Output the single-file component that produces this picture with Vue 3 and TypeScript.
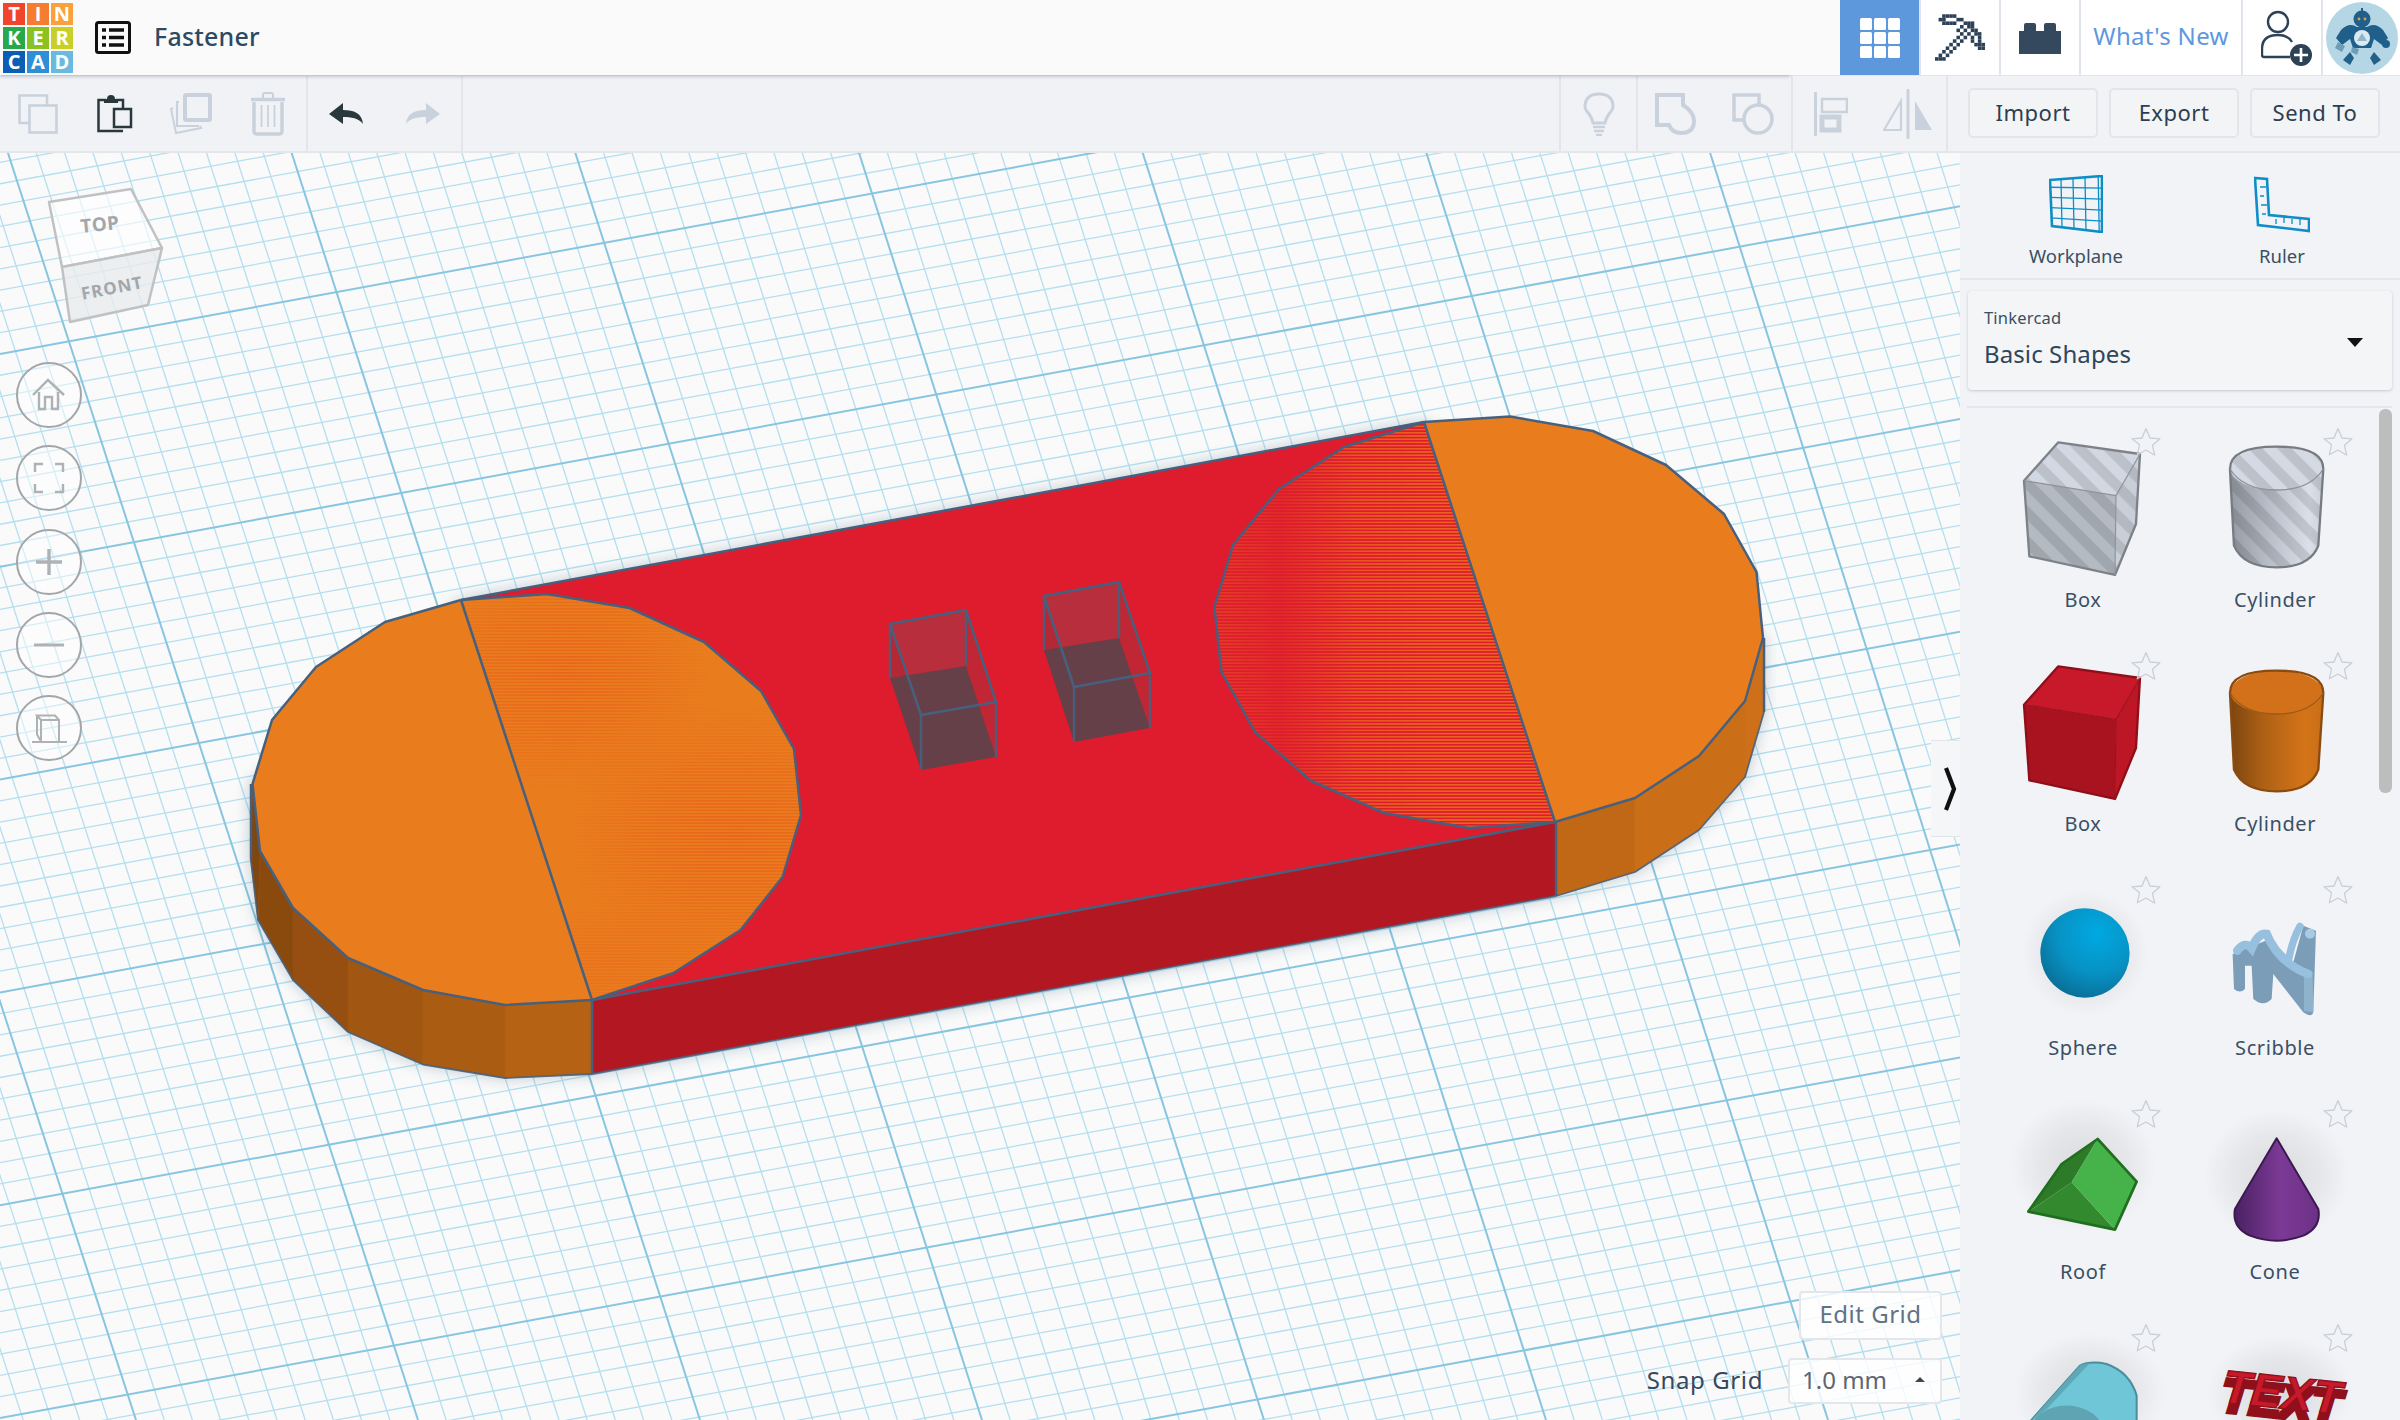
<script setup lang="ts">
type Pt = [number, number]
const pts = (list: Pt[]) => list.map((p) => p.join(',')).join(' ')

interface Seg { x1: number; y1: number; x2: number; y2: number }
const minorLines: Seg[] = []
const majorLines: Seg[] = []
for (let i = -25; i <= 72; i++) {
  const t = i / 10
  const seg = { x1: 7 + 283.7 * t, y1: 150, x2: 418 + 282 * t, y2: 1420 }
  ;(i % 10 === 0 ? majorLines : minorLines).push(seg)
}
for (let j = -10; j <= 85; j++) {
  const y0 = 354 + 212.8 * (j / 10)
  const seg = { x1: 0, y1: y0, x2: 1960, y2: y0 - 0.184 * 1960 }
  ;(j % 10 === 0 ? majorLines : minorLines).push(seg)
}

const discLeftLeft: Pt[] = [[461,600],[385,622],[316,667],[272,720],[252.5,784],[260,851],[293,908],[348,958],[423,990],[505,1005],[592,1000]]
const discLeftRight: Pt[] = [[592,1000],[673.5,973],[740.5,930],[782.6,877],[801,815],[794,749],[761,691],[704,642],[629.5,608],[547,594],[461,600]]
const discRightRight: Pt[] = [[1424,422],[1510,416.5],[1593,431],[1666,465],[1724,514],[1756.5,572],[1763,638],[1745,701],[1699,756],[1635,798],[1555,822]]
const discRightLeft: Pt[] = [[1555,822],[1469,828],[1384,813],[1310.5,780.5],[1255,732],[1221.5,672],[1214.4,607],[1233,545],[1279,489],[1344,447],[1424,422]]

const leftTop: Pt[] = [[252.5,784],[260,851],[293,908],[348,958],[423,990],[505,1005],[592,1000]]
const leftBottom: Pt[] = [[250.6,858],[258,920],[293,980],[348,1032],[423,1064.5],[505,1078],[592,1074]]
const leftColors = ['#7f4610','#8a4a0e','#964f10','#a15711','#ab5c13','#b66214']
const rightTop: Pt[] = [[1555,822],[1635,798],[1699,756],[1745,701],[1764,638]]
const rightBottom: Pt[] = [[1556,896],[1635,872],[1699,830],[1745,777],[1764,712]]
const rightColors = ['#c06816','#ca6e18','#ca6e18','#cd7019']

function segs(top: Pt[], bottom: Pt[], colors: string[]) {
  return colors.map((fill, i) => ({
    fill,
    points: pts([top[i], top[i + 1], bottom[i + 1], bottom[i]]),
  }))
}
const sideSegs = [...segs(leftTop, leftBottom, leftColors), ...segs(rightTop, rightBottom, rightColors)]
const baseOutline = pts([...leftBottom, ...rightBottom, [1764,638], [1424,422], [461,600], [250,784]])

interface Hole { a: Pt; b: Pt; c: Pt; d: Pt; e: Pt; f: Pt; g: Pt; h: Pt }
const holes: Hole[] = [
  { a:[890,624], b:[966,610], c:[996,702], d:[921,715], e:[890,678], f:[966,666], g:[996,757], h:[921,770] },
  { a:[1044,596], b:[1119,582], c:[1150,673], d:[1074,687], e:[1044,650], f:[1119,638], g:[1150,728], h:[1074,742] },
]
const holeFaces = holes.map((H) => ({
  back: pts([H.a, H.b, H.f, H.e]),
  left: pts([H.a, H.e, H.h, H.d]),
  right: pts([H.b, H.c, H.g, H.f]),
  floor: pts([H.e, H.f, H.g, H.h]),
  top: pts([H.a, H.b, H.c, H.d]),
  edges: [[H.a, H.e], [H.b, H.f], [H.c, H.g], [H.d, H.h]] as Pt[][],
}))

const pickRows = [
  '..####........',
  '.##...##......',
  '..####..###...',
  '.......#.##...',
  '......#.#.##..',
  '.......#.#.##.',
  '......#.#.#.#.',
  '.....#.#..#.#.',
  '....#.#....###',
  '...#.#......##',
  '..#.#.........',
  '.#.#..........',
  '###...........',
]
const pickPixels = pickRows.flatMap((row, y) =>
  row.split('').flatMap((c, x) => (c === '#' ? [{ x: x * 11, y: y * 11 }] : [])),
)

const gridCells = [0, 1, 2].flatMap((r) => [0, 1, 2].map((c) => ({ x: c * 14, y: r * 14 })))

const wpV = [10, 20, 30, 41]
const wpH = [12, 22, 32, 42]

const shapes = [
  { label: 'Box', kind: 'boxGray' },
  { label: 'Cylinder', kind: 'cylGray' },
  { label: 'Box', kind: 'boxRed' },
  { label: 'Cylinder', kind: 'cylOrange' },
  { label: 'Sphere', kind: 'sphere' },
  { label: 'Scribble', kind: 'scribble' },
  { label: 'Roof', kind: 'roof' },
  { label: 'Cone', kind: 'cone' },
  { label: 'Round Roof', kind: 'roundRoof' },
  { label: 'Text', kind: 'text' },
]
const navItems = ['home', 'fit', 'plus', 'minus', 'persp']
const logo = [
  { t: 'T', c: '#f0452b' }, { t: 'I', c: '#f57d2f' }, { t: 'N', c: '#f9a03f' },
  { t: 'K', c: '#25a94b' }, { t: 'E', c: '#8cc220' }, { t: 'R', c: '#c8d028' },
  { t: 'C', c: '#0a5fb4' }, { t: 'A', c: '#2f8fd6' }, { t: 'D', c: '#6cb9e0' },
]
</script>

<template>
  <div class="app">
    <svg class="defs" width="0" height="0">
      <defs>
        <pattern id="stripeGrayZoom" width="62" height="62" patternUnits="userSpaceOnUse" patternTransform="rotate(45)">
          <rect width="62" height="31" fill="#000" opacity=".11" />
        </pattern>
        <linearGradient id="cylOrangeSide" x1="0" x2="1" y1="0" y2="0">
          <stop offset="0" stop-color="#7b4510" />
          <stop offset=".35" stop-color="#ad6015" />
          <stop offset=".8" stop-color="#d47418" />
          <stop offset="1" stop-color="#c96e17" />
        </linearGradient>
        <linearGradient id="cylGraySide" x1="0" x2="1" y1="0" y2="0">
          <stop offset="0" stop-color="#959ba4" />
          <stop offset=".5" stop-color="#bfc5cf" />
          <stop offset=".85" stop-color="#dadfe8" />
          <stop offset="1" stop-color="#ccd2dc" />
        </linearGradient>
        <radialGradient id="sphereGrad" cx=".63" cy=".28" r=".8">
          <stop offset="0" stop-color="#00a9e2" />
          <stop offset=".55" stop-color="#0792c4" />
          <stop offset="1" stop-color="#0a6a92" />
        </radialGradient>
        <linearGradient id="coneGrad" x1="0" x2="1" y1="0" y2="0">
          <stop offset="0" stop-color="#4a2162" />
          <stop offset=".55" stop-color="#7c3a96" />
          <stop offset="1" stop-color="#6b3185" />
        </linearGradient>
        <radialGradient id="halo">
          <stop offset="0" stop-color="#000" stop-opacity=".1" />
          <stop offset=".6" stop-color="#000" stop-opacity=".05" />
          <stop offset="1" stop-color="#000" stop-opacity="0" />
        </radialGradient>
      </defs>
    </svg>

    <header class="topbar">
      <div class="top-left">
        <div class="logo">
          <span v-for="l in logo" :key="l.t" class="logo-cell" :style="{ background: l.c }">{{ l.t }}</span>
        </div>
        <svg class="list-icon" width="36" height="33" viewBox="0 0 36 33">
          <rect x="1.5" y="1.5" width="33" height="30" rx="2" fill="none" stroke="#111" stroke-width="3" />
          <path d="M7 9h4M14 9h15M7 16.500h4M14 16.500h15M7 24h4M14 24h15" stroke="#111" stroke-width="3.600" fill="none" />
        </svg>
        <span class="title">Fastener</span>
      </div>
      <div class="top-gap"></div>
      <nav class="top-nav">
        <div class="nav-item active w79">
          <svg width="40" height="40" viewBox="0 0 40 40">
            <rect v-for="c in gridCells" :key="c.x + '-' + c.y" :x="c.x" :y="c.y" width="12" height="12" rx="1.500" fill="#fff" />
          </svg>
        </div>
        <div class="nav-item w80 sep">
          <svg width="50" height="47" viewBox="0 0 154 143">
            <rect v-for="(p, i) in pickPixels" :key="i" :x="p.x" :y="p.y" width="11" height="11" fill="#2d4256" />
          </svg>
        </div>
        <div class="nav-item w80 sep">
          <svg width="42" height="32" viewBox="0 0 42 32">
            <path d="M0 9h5V3q0-2 2-2h8q2 0 2 2v6h8V3q0-2 2-2h8q2 0 2 2v6h5v23H0z" fill="#34495e" />
          </svg>
        </div>
        <div class="nav-item w162 sep whats-new">What's New</div>
        <div class="nav-item w80 sep user-item">
          <svg width="52" height="56" viewBox="0 0 52 56">
            <circle cx="17" cy="12" r="10" fill="none" stroke="#2d4256" stroke-width="2.400" />
            <path d="M29 47H3q-2 0-2-2v-6q0-14 16-14 10 0 14 7" fill="none" stroke="#2d4256" stroke-width="2.400" />
            <circle cx="40" cy="45" r="11" fill="#2d4256" />
            <path d="M40 38v14M33 45h14" stroke="#fff" stroke-width="2.600" />
          </svg>
        </div>
        <div class="nav-item w79 sep">
          <svg width="72" height="72" viewBox="0 0 72 72">
            <circle cx="36" cy="36" r="36" fill="#b5d7e5" />
            <circle cx="36" cy="17" r="8.500" fill="#1f5f8a" />
            <path d="M36 6v4" stroke="#1f5f8a" stroke-width="2" />
            <circle cx="33" cy="17" r="1.400" fill="#d9a24a" /><circle cx="39" cy="17" r="1.400" fill="#d9a24a" />
            <path d="M15 28q8-8 16-3h10q8-5 16 3l5 8-6 7-8-6-3 9H27l-3-9-8 6-6-7z" fill="#1f5f8a" />
            <circle cx="36" cy="36" r="8" fill="#dbeaf1" />
            <path d="M36 31l5 8h-10z" fill="#8fb6cc" />
            <path d="M24 50l-7 8 7 5 4-7zM48 50l7 8-7 5-4-7z" fill="#24618a" />
            <path d="M12 40l7 4-3 6-7-4zM26 45l7 2-2 6-6-3z" fill="#6f9db8" />
            <circle cx="60" cy="42" r="4" fill="#1f5f8a" />
          </svg>
        </div>
      </nav>
    </header>

    <div class="toolbar">
      <div class="tool-group w308 divided">
        <div class="tbtn">
          <svg width="40" height="40" viewBox="0 0 40 40" fill="none" stroke="#c9d2dc" stroke-width="2.600">
            <path d="M11 29H1.500V1.500H29V11" /><rect x="11.500" y="11.500" width="27" height="27" />
          </svg>
        </div>
        <div class="tbtn">
          <svg width="36" height="40" viewBox="0 0 36 40" fill="none" stroke="#29383d" stroke-width="2.500">
            <path d="M9 6H1.500v31H26" /><path d="M26 14V6h-7" />
            <path d="M9 9V5h3q0-4 4-4t4 4h3v4z" fill="#29383d" stroke="none" transform="translate(-2 0)" />
            <rect x="17" y="15" width="17" height="18" fill="#f1f2f5" />
          </svg>
        </div>
        <div class="tbtn">
          <svg width="42" height="42" viewBox="0 0 42 42" fill="none" stroke="#c9d2dc">
            <path d="M3 15l-2 1 5 24 25-5-1-2" stroke-width="2" />
            <path d="M9 9L7 9v24h22" stroke-width="2.200" />
            <rect x="15" y="2" width="25" height="25" rx="1" stroke-width="4" />
          </svg>
        </div>
        <div class="tbtn">
          <svg width="34" height="44" viewBox="0 0 34 44" fill="none" stroke="#c9d2dc">
            <path d="M0 7.500h34" stroke-width="3.500" />
            <path d="M12 6V3q0-2 2-2h6q2 0 2 2v3" stroke-width="2" />
            <path d="M3 10v29q0 3 3 3h22q3 0 3-3V10" stroke-width="3.500" />
            <path d="M10.500 13v22M17 13v22M23.500 13v22" stroke-width="1.800" />
          </svg>
        </div>
      </div>
      <div class="tool-group w155 divided">
        <div class="tbtn">
          <svg width="34" height="22" viewBox="0 0 34 22"><path d="M0 11L14 0v7c11 0 19 3 20 14-4-6-12-7-20-7v7z" fill="#29383d" /></svg>
        </div>
        <div class="tbtn">
          <svg width="34" height="22" viewBox="0 0 34 22"><path d="M34 11L20 0v7C9 7 1 10 0 21c4-6 12-7 20-7v7z" fill="#c9d2dc" /></svg>
        </div>
      </div>
      <div class="tool-spacer"></div>
      <div class="tool-group w79 divided-l divided">
        <div class="tbtn">
          <svg width="32" height="44" viewBox="0 0 32 44" fill="none" stroke="#c9d2dc" stroke-width="3">
            <path d="M10 31q-1-5-4-9Q2 17 2 15 2 2 16 2t14 13q0 2-4 7-3 4-4 9z" />
            <path d="M10 35h12M11 39h10M13 43h6" stroke-width="2.500" />
          </svg>
        </div>
      </div>
      <div class="tool-group w155 divided">
        <div class="tbtn">
          <svg width="42" height="42" viewBox="0 0 42 42" fill="none" stroke="#c9d2dc" stroke-width="4">
            <path d="M2 2h26v10q11 7 11 16 0 12-13 12-9 0-12-8H2z" />
          </svg>
        </div>
        <div class="tbtn">
          <svg width="42" height="42" viewBox="0 0 42 42" fill="none" stroke="#c9d2dc" stroke-width="3.500">
            <path d="M12 27H2V2h25v10" /><circle cx="26" cy="26" r="14" />
          </svg>
        </div>
      </div>
      <div class="tool-group w155 divided">
        <div class="tbtn">
          <svg width="34" height="44" viewBox="0 0 34 44">
            <rect width="3" height="44" x="0" rx="1" fill="#c9d2dc" />
            <rect x="8" y="7" width="25" height="13" fill="none" stroke="#c9d2dc" stroke-width="2.500" />
            <rect x="8" y="25" width="17" height="13" fill="none" stroke="#c9d2dc" stroke-width="5" />
          </svg>
        </div>
        <div class="tbtn">
          <svg width="50" height="50" viewBox="0 0 50 50">
            <rect x="23.500" width="3" height="50" rx="1" fill="#c9d2dc" />
            <path d="M18 12v29H1z" fill="none" stroke="#c9d2dc" stroke-width="2.200" />
            <path d="M32 12v29h17z" fill="#c9d2dc" />
          </svg>
        </div>
      </div>
      <div class="action-group">
        <button class="action">Import</button>
        <button class="action">Export</button>
        <button class="action">Send To</button>
      </div>
    </div>

    <div class="work">
      <main class="canvas">
        <svg class="scene" width="1960" height="1267" viewBox="0 153 1960 1267">
          <defs>
            <filter id="paper" x="0" y="0" width="100%" height="100%">
              <feTurbulence type="fractalNoise" baseFrequency=".8" numOctaves="2" seed="4" />
              <feColorMatrix values="0 0 0 0 .6 0 0 0 0 .6 0 0 0 0 .6 0 0 0 .09 0" />
            </filter>
            <filter id="soft" x="-10%" y="-10%" width="120%" height="120%"><feGaussianBlur stdDeviation="8" /></filter>
            <pattern id="zfightA" width="4" height="3.200" patternUnits="userSpaceOnUse">
              <rect width="4" height="1.500" fill="#ea5f1c" />
            </pattern>
            <pattern id="zfightB" width="4" height="3.200" patternUnits="userSpaceOnUse">
              <rect width="4" height="1.600" fill="#e9631f" />
            </pattern>
            <radialGradient id="blob">
              <stop offset="0" stop-color="#fff" stop-opacity=".95" />
              <stop offset=".55" stop-color="#fff" stop-opacity=".55" />
              <stop offset="1" stop-color="#fff" stop-opacity="0" />
            </radialGradient>
            <mask id="maskA" maskUnits="userSpaceOnUse" x="440" y="580" width="380" height="440">
              <ellipse cx="565" cy="670" rx="150" ry="125" fill="url(#blob)" />
              <ellipse cx="735" cy="835" rx="175" ry="135" fill="url(#blob)" />
              <ellipse cx="620" cy="960" rx="110" ry="60" fill="url(#blob)" opacity=".55" />
            </mask>
            <linearGradient id="fadeB" gradientUnits="userSpaceOnUse" x1="1214" x2="1440" y1="0" y2="0">
              <stop offset="0" stop-color="#fff" stop-opacity=".5" />
              <stop offset=".3" stop-color="#fff" stop-opacity=".22" />
              <stop offset=".62" stop-color="#fff" stop-opacity=".8" />
              <stop offset="1" stop-color="#fff" />
            </linearGradient>
            <mask id="maskB" maskUnits="userSpaceOnUse" x="1200" y="410" width="370" height="430">
              <rect x="1200" y="410" width="370" height="430" fill="url(#fadeB)" />
            </mask>
          </defs>

          <rect x="0" y="153" width="1960" height="1267" fill="#fcfcfc" />
          <g class="minor"><line v-for="(l, i) in minorLines" :key="'m' + i" :x1="l.x1" :y1="l.y1" :x2="l.x2" :y2="l.y2" /></g>
          <g class="major"><line v-for="(l, i) in majorLines" :key="'M' + i" :x1="l.x1" :y1="l.y1" :x2="l.x2" :y2="l.y2" /></g>
          <rect x="0" y="153" width="1960" height="1267" filter="url(#paper)" />

          <polygon :points="baseOutline" fill="#2c5a76" opacity=".32" filter="url(#soft)" />

          <polygon v-for="(s, i) in sideSegs" :key="'s' + i" :points="s.points" :fill="s.fill" :stroke="s.fill" stroke-width=".6" />
          <polygon points="592,1000 1555,822 1556,896 592,1074" fill="#b31722" />
          <polygon points="461,600 1424,422 1555,822 592,1000" fill="#de1c2d" />

          <g v-for="(h, i) in holeFaces" :key="'h' + i">
            <polygon :points="h.back" fill="#b92e3c" />
            <polygon :points="h.left" fill="#b42836" />
            <polygon :points="h.right" fill="#c12634" />
            <polygon :points="h.floor" fill="#664048" />
            <polygon :points="h.top" fill="none" stroke="#47607d" stroke-width="2.500" stroke-linejoin="round" />
            <line v-for="(e, j) in h.edges" :key="j" :x1="e[0][0]" :y1="e[0][1]" :x2="e[1][0]" :y2="e[1][1]" stroke="#47607d" stroke-width="2.500" opacity=".9" />
          </g>

          <polygon :points="pts([...discLeftLeft, ...discLeftRight])" fill="#e97d1e" />
          <polygon :points="pts(discLeftRight)" fill="url(#zfightA)" mask="url(#maskA)" />
          <polygon :points="pts(discRightRight)" fill="#e97d1e" />
          <polygon :points="pts(discRightLeft)" fill="url(#zfightB)" mask="url(#maskB)" />

          <g class="edge">
            <polyline :points="pts([...discLeftLeft, ...discLeftRight])" />
            <polyline :points="pts([...discRightRight, ...discRightLeft])" />
            <line x1="461" y1="600" x2="592" y2="1000" />
            <line x1="1424" y1="422" x2="1555" y2="822" />
            <line x1="461" y1="600" x2="1424" y2="422" />
            <line x1="592" y1="1000" x2="1555" y2="822" />
            <line x1="592" y1="1000" x2="592" y2="1074" />
            <line x1="1556" y1="822" x2="1556" y2="896" />
            <polyline :points="pts(leftBottom)" class="thin" />
            <polyline :points="pts(rightBottom)" class="thin" />
            <line x1="592" y1="1074" x2="1556" y2="896" class="thin" />
            <line x1="251" y1="784" x2="251" y2="858" />
            <line x1="1764" y1="638" x2="1764" y2="712" />
          </g>
        </svg>

        <svg class="cube-labels" width="170" height="150" viewBox="40 180 170 150">
          <polygon points="49,202 131,189 162,248 62,267" fill="#fff" fill-opacity=".6" stroke="#bfc1c3" stroke-width="2.500" stroke-linejoin="round" />
          <polygon points="62,267 162,248 148,305 70,322" fill="#e9ebed" fill-opacity=".8" stroke="#bfc1c3" stroke-width="2.500" stroke-linejoin="round" />
          <text x="100" y="231" class="cube-text" text-anchor="middle" transform="rotate(-6 100 224)">TOP</text>
          <text x="112" y="294" class="cube-text front" text-anchor="middle" transform="rotate(-11 112 288)">FRONT</text>
        </svg>

        <div class="nav-col">
          <div v-for="n in navItems" :key="n" class="nav-btn">
            <svg width="36" height="36" viewBox="0 0 36 36" fill="none" stroke="#aeb2b5" stroke-width="2.400">
              <path v-if="n === 'home'" d="M2 18L17 3l16 15M8 15v17h6V20h7v12h6V15" />
              <path v-else-if="n === 'fit'" d="M4 12V4h8M24 4h8v8M4 24v8h8M24 32h8v-8" />
              <path v-else-if="n === 'plus'" d="M18 5v26M5 18h26" stroke-width="3.400" />
              <path v-else-if="n === 'minus'" d="M3 18h30" stroke-width="3" />
              <path v-else d="M1 32h35M10 32V10h18v22M10 10L6 5.500H24l4 4.500M6 5.500v19l4 7" stroke-width="2" />
            </svg>
          </div>
        </div>

        <div class="tab">
          <svg width="14" height="46" viewBox="0 0 14 46"><path d="M3 2l8 21-8 21" fill="none" stroke="#111" stroke-width="4.200" /></svg>
        </div>

        <div class="grid-controls">
          <button class="edit-grid">Edit Grid</button>
          <div class="snap">
            <span class="snap-label">Snap Grid</span>
            <div class="snap-select">
              <span>1.0 mm</span>
              <i class="up-arrow"></i>
            </div>
          </div>
        </div>
      </main>

      <aside class="panel">
        <div class="tools">
          <div class="tool">
            <svg width="54" height="58" viewBox="0 0 54 58" fill="none" stroke="#0d8ec6">
              <path d="M1 5L53 1v56L3 51z" stroke-width="2.600" />
              <path v-for="v in wpV" :key="'v' + v" :d="`M${v * 1.2} ${4.500 - v * .07}L${v * 1.2 + 1} ${52 + v * .11}`" stroke-width="1.300" />
              <path v-for="h in wpH" :key="'h' + h" :d="`M${1 + h * .02} ${h * 1.02}L53 ${h * 1.1}`" stroke-width="1.300" />
            </svg>
            <span class="tool-label">Workplane</span>
          </div>
          <div class="tool">
            <svg width="56" height="54" viewBox="0 0 56 54" fill="none" stroke="#0d8ec6">
              <path d="M1 1l12 1 2 36 40 4v12L4 48z" stroke-width="2.600" />
              <path d="M6 10h6M6 19h4M7 28h6M8 37h4M22 42v5M30 40v6M38 42v5M46 42v6" stroke-width="1.300" />
            </svg>
            <span class="tool-label">Ruler</span>
          </div>
        </div>

        <div class="select">
          <div class="select-small">Tinkercad</div>
          <div class="select-main">Basic Shapes</div>
          <i class="down-arrow"></i>
        </div>
        <div class="panel-rule"></div>

        <div class="shapes">
          <div v-for="(s, i) in shapes" :key="i" class="shape">
            <svg class="star" width="30" height="30" viewBox="0 0 30 30">
              <path d="M15 1.500l4 9.500 10 .8-7.600 6.500 2.300 9.900L15 23l-8.700 4.700 2.300-9.900L1 11.800l10-.8z" fill="none" stroke="#c8cfd7" stroke-width="1.300" stroke-linejoin="round" />
            </svg>
            <svg class="thumb" width="192" height="168" viewBox="0 0 192 168">
              <g v-if="s.kind === 'boxGray' || s.kind === 'boxRed'" transform="translate(-37 -17) scale(.3333)">
                <g :class="s.kind === 'boxRed' ? 'bx red' : 'bx gray'" stroke-linejoin="round">
                  <polygon class="t" points="325,130 570,165 498,290 222,245" />
                  <polygon class="f" points="222,245 498,290 495,528 238,472" />
                  <polygon class="r" points="498,290 570,165 558,375 495,528" />
                  <template v-if="s.kind === 'boxGray'">
                    <polygon fill="url(#stripeGrayZoom)" points="325,130 570,165 498,290 222,245" />
                    <polygon fill="url(#stripeGrayZoom)" points="222,245 498,290 495,528 238,472" />
                    <polygon fill="url(#stripeGrayZoom)" points="498,290 570,165 558,375 495,528" />
                  </template>
                  <path class="o" d="M325 130L570 165 558 375 495 528 238 472 222 245z" />
                  <path class="i" d="M222 245L498 290 570 165M498 290L495 528" />
                </g>
              </g>
              <g v-else-if="s.kind === 'cylGray' || s.kind === 'cylOrange'" transform="translate(-229 -17) scale(.3333)">
                <path d="M840 210L852 440Q880 505 980 505T1105 440L1120 210z" :fill="s.kind === 'cylGray' ? 'url(#cylGraySide)' : 'url(#cylOrangeSide)'" />
                <ellipse cx="980" cy="208" rx="140" ry="65" :fill="s.kind === 'cylGray' ? '#d4d9e3' : '#d2711a'" />
                <path v-if="s.kind === 'cylGray'" d="M840 210L852 440Q880 505 980 505T1105 440L1120 210Q1120 143 980 143T840 210z" fill="url(#stripeGrayZoom)" />
                <path d="M840 210L852 440Q880 505 980 505T1105 440L1120 210Q1120 143 980 143T840 210z" fill="none" :stroke="s.kind === 'cylGray' ? '#777c82' : '#8a4b10'" stroke-width="7" />
                <path d="M840 210Q880 273 980 273T1120 210" fill="none" :stroke="s.kind === 'cylGray' ? '#8d9299' : '#9c5a16'" stroke-width="4" />
              </g>
              <g v-else-if="s.kind === 'sphere'" transform="translate(-37 35) scale(.3333)">
                <circle cx="405" cy="162" r="190" fill="url(#halo)" />
                <circle cx="405" cy="162" r="134" fill="url(#sphereGrad)" />
              </g>
              <g v-else-if="s.kind === 'scribble'" transform="translate(-229 35) scale(.3333)">
                <path d="M848 165L852 270Q870 285 885 270L885 200 905 200 910 300Q940 325 965 300L970 225 1060 340Q1085 358 1090 340L1098 95 1060 80 1030 190 960 120z" fill="#7b9db8" />
                <path d="M1062 215L1088 232 1090 340 1062 336z" fill="#8fb2cd" />
                <path d="M862 155Q885 125 905 148 925 100 950 105 985 190 1075 225" fill="none" stroke="#97c0de" stroke-width="26" stroke-linecap="round" />
                <path d="M1015 185Q1028 120 1050 82" fill="none" stroke="#97c0de" stroke-width="22" stroke-linecap="round" />
                <circle cx="1080" cy="104" r="15" fill="#a7cbe4" />
              </g>
              <g v-else-if="s.kind === 'roof'" transform="translate(-37 -189) scale(.3333)">
                <ellipse cx="400" cy="800" rx="220" ry="200" fill="url(#halo)" />
                <polygon points="235,938 335,795 443,720 365,850" fill="#2d7a28" />
                <polygon points="235,938 365,850 495,992" fill="#338a2e" />
                <polygon points="443,720 560,848 495,992 365,850" fill="#46b24a" />
                <path d="M235 938L335 795 443 720 560 848 495 992z" fill="none" stroke="#1f6f1f" stroke-width="8" stroke-linejoin="round" />
              </g>
              <g v-else-if="s.kind === 'cone'" transform="translate(-229 -189) scale(.3333)">
                <ellipse cx="980" cy="830" rx="220" ry="200" fill="url(#halo)" />
                <path d="M980 718L855 930Q845 985 900 1010 980 1040 1060 1010 1115 985 1105 930z" fill="url(#coneGrad)" stroke="#3b1a50" stroke-width="6" stroke-linejoin="round" />
              </g>
              <g v-else-if="s.kind === 'roundRoof'" transform="translate(-37 -413) scale(.3333)">
                <ellipse cx="420" cy="1480" rx="230" ry="180" fill="url(#halo)" />
                <path d="M240 1568L390 1400Q420 1385 470 1395 540 1420 560 1490V1640H240z" fill="#6ec6d6" stroke="#4b8d9c" stroke-width="6" />
                <path d="M240 1568L390 1400Q405 1393 420 1392L290 1530z" fill="#5fa8b8" />
                <ellipse cx="350" cy="1600" rx="110" ry="80" fill="#5ea4b2" />
              </g>
              <g v-else transform="translate(-229 -413) scale(.3333)">
                <ellipse cx="990" cy="1480" rx="220" ry="170" fill="url(#halo)" />
                <g transform="rotate(6 990 1500)">
                  <text x="815" y="1555" class="txt3d under">TEXT</text>
                  <text x="815" y="1528" class="txt3d">TEXT</text>
                </g>
              </g>
            </svg>
            <span class="shape-label">{{ s.label }}</span>
          </div>
        </div>
        <div class="scrollbar"></div>
      </aside>
    </div>
  </div>
</template>

<style scoped>
.app {
  width: 2400px;
  height: 1420px;
  overflow: hidden;
  display: flex;
  flex-direction: column;
  font-family: "Noto Sans", "Open Sans", sans-serif;
  color: #2c4660;
  background: #f2f3f6;
}
.defs { position: absolute; }
button { font-family: inherit; }

.topbar {
  height: 76px;
  flex: none;
  display: flex;
  background: #fff;
  border-bottom: 1px solid #e3e5ec;
  box-sizing: border-box;
  position: relative;
  z-index: 2;
}
.top-left {
  width: 1790px;
  height: 75px;
  background: #fafafa;
  display: flex;
  align-items: center;
  box-shadow: 0 2px 3px rgba(90, 100, 130, .28);
}
.top-gap { width: 50px; background: #fafafa; height: 75px; }
.logo {
  width: 72px;
  display: grid;
  grid-template-columns: repeat(3, 22px);
  grid-auto-rows: 22px;
  gap: 2px;
  margin-left: 3px;
}
.logo-cell {
  color: #fff;
  font: 700 20px/22px "Open Sans", sans-serif;
  text-align: center;
}
.list-icon { margin-left: 20px; }
.title {
  margin-left: 23px;
  padding-bottom: 3px;
  font-size: 25px;
  font-weight: 500;
  color: #2c4a63;
  letter-spacing: .2px;
}
.top-nav { display: flex; flex: 1; height: 75px; }
.nav-item {
  height: 75px;
  box-sizing: border-box;
  display: flex;
  align-items: center;
  justify-content: center;
  background: #fff;
}
.user-item { padding-left: 9px; }
.w79 { width: 79px; }
.w80 { width: 80px; }
.w162 { width: 162px; }
.sep { border-left: 2px solid #e1e4ea; }
.active { background: #5d97dc; }
.whats-new { color: #5f98dd; font-size: 24px; letter-spacing: .3px; padding-bottom: 5px; }

.toolbar {
  height: 77px;
  flex: none;
  box-sizing: border-box;
  background: #f1f2f5;
  border-bottom: 2px solid #e4e6ea;
  display: flex;
}
.tool-group { display: flex; height: 75px; box-sizing: border-box; }
.tool-group.w308 { width: 308px; }
.tool-group.w155 { width: 155px; }
.tool-group.w79 { width: 79px; }
.divided { border-right: 2px solid #e3e5ea; }
.divided-l { border-left: 2px solid #e3e5ea; }
.tool-spacer { width: 1096px; }
.tbtn { flex: 1; display: flex; align-items: center; justify-content: center; }
.action-group { display: flex; gap: 11px; margin-left: 20px; align-items: flex-start; padding-top: 12px; }
.action {
  width: 130px;
  height: 50px;
  border: 2px solid #e2e5ea;
  border-radius: 5px;
  background: #f3f4f6;
  color: #2c3e50;
  font-size: 22px;
  letter-spacing: .5px;
  padding: 0 0 3px;
}

.work { flex: 1; display: flex; min-height: 0; }
.canvas { width: 1960px; height: 1267px; position: relative; overflow: hidden; flex: none; }
.scene { display: block; }
.minor line { stroke: #b2e0f1; stroke-width: 1.3; }
.major line { stroke: #84c5e2; stroke-width: 2; }
.edge polyline, .edge line { fill: none; stroke: #47607d; stroke-width: 2.5; stroke-linejoin: round; }
.edge .thin { stroke-width: 1.8; opacity: .85; }
.cube-labels { position: absolute; left: 40px; top: 27px; }
.cube-text { font: 700 19px "Noto Sans", sans-serif; fill: #a3a7ab; letter-spacing: .5px; }
.cube-text.front { font-size: 17px; letter-spacing: 1px; }

.nav-col { position: absolute; left: 16px; top: 209px; display: flex; flex-direction: column; gap: 17.3px; }
.nav-btn {
  width: 66px;
  height: 66px;
  box-sizing: border-box;
  border: 2px solid #a2a6a9;
  border-radius: 50%;
  background: rgba(255, 255, 255, .45);
  display: flex;
  align-items: center;
  justify-content: center;
}
.nav-btn svg { overflow: visible; }

.tab {
  position: absolute;
  right: 0;
  top: 587px;
  width: 29px;
  height: 97px;
  box-sizing: border-box;
  background: #f5f6f8;
  border-top: 1px solid #e2e5ea;
  border-bottom: 1px solid #e2e5ea;
  display: flex;
  align-items: center;
  justify-content: center;
  padding-left: 8px;
}

.grid-controls {
  position: absolute;
  right: 18px;
  bottom: 16px;
  display: flex;
  flex-direction: column;
  align-items: flex-end;
  gap: 18px;
}
.edit-grid {
  width: 143px;
  height: 49px;
  border: 2px solid #e3e6ea;
  border-radius: 4px;
  background: rgba(255, 255, 255, .8);
  color: #5e7386;
  font-size: 24px;
  letter-spacing: .5px;
  padding: 0 0 5px;
}
.snap { display: flex; align-items: center; gap: 25px; }
.snap-label { font-size: 24px; color: #34495e; letter-spacing: .6px; padding-bottom: 4px; }
.snap-select {
  width: 154px;
  height: 46px;
  box-sizing: border-box;
  border: 2px solid #e3e6ea;
  border-radius: 4px;
  background: rgba(255, 255, 255, .8);
  display: flex;
  align-items: center;
  justify-content: space-between;
  padding: 0 15px 3px 12px;
  color: #5c6670;
  font-size: 24px;
}
.up-arrow { width: 0; height: 0; border: 5px solid transparent; border-bottom: 5px solid #3b4652; border-top: 0; }

.panel { width: 440px; height: 1267px; position: relative; overflow: hidden; background: #f2f3f6; flex: none; }
.tools {
  height: 127px;
  box-sizing: border-box;
  border-bottom: 2px solid #e5e7ea;
  padding-left: 13px;
  display: grid;
  grid-template-columns: 206px 206px;
}
.tool { display: flex; flex-direction: column; align-items: center; padding-top: 22px; }
.tool svg { height: 58px; }
.tool-label { margin-top: 10px; font-size: 18.5px; line-height: 26px; color: #3a4f64; }
.select {
  margin: 11px 8px 0;
  height: 99px;
  box-sizing: border-box;
  position: relative;
  padding: 16px 16px;
  background: #f4f5f7;
  border-radius: 4px;
  box-shadow: 0 1px 3px rgba(70, 90, 120, .28);
}
.select-small { font-size: 16.5px; line-height: 22px; color: #3a4f63; letter-spacing: .2px; }
.select-main { font-size: 24px; line-height: 32px; margin-top: 9px; color: #2c4660; letter-spacing: .1px; }
.down-arrow {
  position: absolute;
  left: 379px;
  top: 47px;
  width: 0; height: 0;
  border-left: 8px solid transparent;
  border-right: 8px solid transparent;
  border-top: 9px solid #111;
}
.panel-rule { margin: 16px 8px 0 7px; height: 2px; background: #e3e8ee; }
.shapes {
  margin: 8px 0 0 27px;
  display: grid;
  grid-template-columns: 192px 192px;
  grid-auto-rows: 224px;
}
.shape { position: relative; display: flex; flex-direction: column; align-items: center; }
.thumb { display: block; overflow: visible; flex: none; }
.star { position: absolute; left: 144px; top: 11px; z-index: 1; }
.shape-label { font-size: 20px; line-height: 28px; margin-top: 1.5px; color: #3a4f64; letter-spacing: .6px; }
.scrollbar {
  position: absolute;
  left: 419px;
  top: 256px;
  width: 13px;
  height: 384px;
  border-radius: 6px;
  background: #bdbdbd;
}
.bx .o { fill: none; stroke-width: 7; }
.bx .i { fill: none; stroke-width: 3.5; }
.bx.gray .t { fill: #d2d8e2; }
.bx.gray .f { fill: #b4bac2; }
.bx.gray .r { fill: #c9cfd9; }
.bx.gray .o { stroke: #7d8288; }
.bx.gray .i { stroke: #8e9399; }
.bx.red .t { fill: #c8192a; }
.bx.red .f { fill: #a9131f; }
.bx.red .r { fill: #bd1625; }
.bx.red .o { stroke: #8e0f1a; }
.bx.red .i { stroke: #9b1320; }
.txt3d { font: italic 700 140px "Liberation Sans", sans-serif; fill: #c8192a; stroke: #8f0f1a; stroke-width: 4; }
.txt3d.under { fill: #8f0f1a; stroke-width: 14; }
</style>
